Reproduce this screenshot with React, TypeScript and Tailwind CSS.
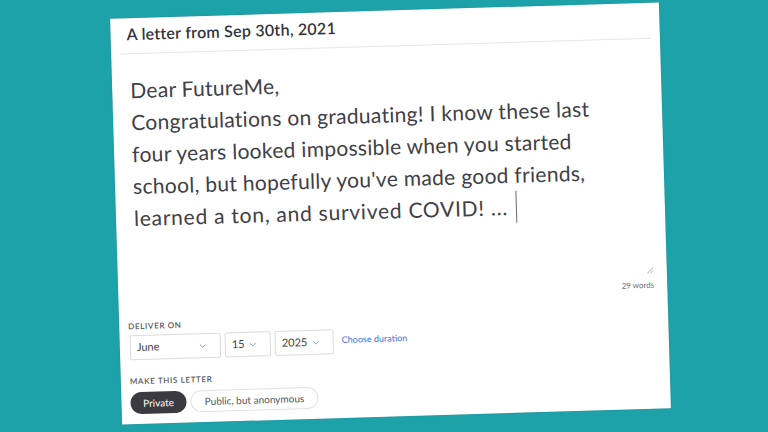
import React from 'react';
import { ChevronDown } from 'lucide-react';

const letterLines = [
  'Dear FutureMe,',
  'Congratulations on graduating! I know these last',
  'four years looked impossible when you started',
  "school, but hopefully you've made good friends,",
  'learned a ton, and survived COVID! ...',
];

interface SelectBoxProps {
  value: string;
  width: string;
}

// fake <select> with a blue chevron on the right
const SelectBox: React.FC<SelectBoxProps> = ({ value, width }) => (
  <div
    className={`${width} h-[25px] flex items-center justify-between pl-[6px] pr-[12px] border border-[#dcdcdc] rounded-[2px] bg-white text-[11px] text-[#3c3c44]`}
  >
    <span>{value}</span>
    <ChevronDown size={10} strokeWidth={2} className="text-[#5a8cec]" />
  </div>
);

const App: React.FC = () => {
  const last = letterLines.length - 1;

  return (
    <div
      className="w-[768px] h-[432px] overflow-hidden bg-[#1ea2aa] flex items-center justify-center"
      style={{ fontFamily: 'Lato, "Noto Sans", sans-serif' }}
    >
      <div className="w-[549px] h-[406px] bg-white flex flex-col translate-x-[6px] -translate-y-[2.5px] rotate-[-1.7deg] shadow-[0_0_1px_rgba(0,0,0,0.25)]">
        {/* header */}
        <div className="mx-[9px] pl-[7px] pt-[4px] pb-[7px] border-b border-[#e6e6e6] text-[16px] leading-[24px] tracking-[0.25px] font-semibold text-[#33333b]">
          A letter from Sep 30th, 2021
        </div>

        {/* letter body */}
        <div className="mt-[20px] pl-[18px] text-[21px] leading-[32px] tracking-[0.3px] text-[#404048]">
          {letterLines.map((line, i) => (
            <div key={i} className="h-[32px] flex items-center whitespace-nowrap">
              <span className={i === last ? 'tracking-[0.75px]' : ''}>{line}</span>
              {i === last && <span className="ml-[8px] w-px h-[32px] bg-[#6a6a70]" />}
            </div>
          ))}
        </div>

        <div className="mt-[48px] h-[7px] flex justify-end pr-[13px]">
          <svg width="7" height="7" viewBox="0 0 7 7" className="text-[#9a9a9a]">
            <path d="M6.5 0.5 L0.5 6.5 M6.5 3.5 L3.5 6.5" stroke="currentColor" strokeWidth="0.8" fill="none" />
          </svg>
        </div>
        <div className="mt-[6px] pr-[13px] text-right text-[8px] leading-[10px] text-[#6b6b70]">29 words</div>

        {/* delivery date */}
        <div className="mt-[16px] pl-[9px] text-[8px] leading-[10px] font-semibold tracking-[0.08em] uppercase text-[#55555c]">
          Deliver on
        </div>
        <div className="mt-[4px] pl-[10px] flex items-center gap-[4px]">
          <SelectBox value="June" width="w-[91px]" />
          <SelectBox value="15" width="w-[46px]" />
          <SelectBox value="2025" width="w-[59px]" />
          <span className="ml-[4px] -mt-[3px] text-[9px] text-[#3d6fe0]">Choose duration</span>
        </div>

        {/* privacy */}
        <div className="mt-[16px] pl-[9px] text-[8px] leading-[10px] font-semibold tracking-[0.08em] uppercase text-[#55555c]">
          Make this letter
        </div>
        <div className="mt-[6px] pl-[9px] flex items-center gap-[4px]">
          <span className="w-[56px] h-[22px] rounded-full bg-[#3b3a41] text-white text-[10px] flex items-center justify-center">
            Private
          </span>
          <span className="w-[128px] h-[22px] rounded-full border border-[#e2e2e2] text-[#55555c] text-[10px] flex items-center justify-center">
            Public, but anonymous
          </span>
        </div>
      </div>
    </div>
  );
};

export default App;
